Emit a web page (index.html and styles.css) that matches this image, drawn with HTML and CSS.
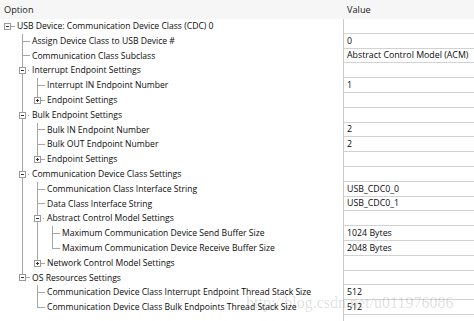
FILE: index.html
```html
<!DOCTYPE html>
<html>
<head>
<meta charset="utf-8">
<link rel="stylesheet" href="styles.css">
</head>
<body>
<div class="grid">
  <div class="hdr hdr-opt">Option</div>
  <div class="hdr hdr-val">Value</div>

  <div class="opt"><span class="c root"><span class="box minus"></span></span><span class="t">USB Device: Communication Device Class (CDC) 0</span></div>
  <div class="val"></div>

  <div class="opt"><span class="c"></span><span class="c tee"></span><span class="t">Assign Device Class to USB Device #</span></div>
  <div class="val">0</div>

  <div class="opt"><span class="c"></span><span class="c tee"></span><span class="t">Communication Class Subclass</span></div>
  <div class="val">Abstract Control Model (ACM)</div>

  <div class="opt"><span class="c"></span><span class="c full"><span class="box minus"></span></span><span class="t">Interrupt Endpoint Settings</span></div>
  <div class="val"></div>

  <div class="opt"><span class="c"></span><span class="c full"></span><span class="c tee"></span><span class="t">Interrupt IN Endpoint Number</span></div>
  <div class="val">1</div>

  <div class="opt"><span class="c"></span><span class="c full"></span><span class="c elbow"><span class="box plus"></span></span><span class="t">Endpoint Settings</span></div>
  <div class="val"></div>

  <div class="opt"><span class="c"></span><span class="c full"><span class="box minus"></span></span><span class="t">Bulk Endpoint Settings</span></div>
  <div class="val"></div>

  <div class="opt"><span class="c"></span><span class="c full"></span><span class="c tee"></span><span class="t">Bulk IN Endpoint Number</span></div>
  <div class="val">2</div>

  <div class="opt"><span class="c"></span><span class="c full"></span><span class="c tee"></span><span class="t">Bulk OUT Endpoint Number</span></div>
  <div class="val">2</div>

  <div class="opt"><span class="c"></span><span class="c full"></span><span class="c elbow"><span class="box plus"></span></span><span class="t">Endpoint Settings</span></div>
  <div class="val"></div>

  <div class="opt"><span class="c"></span><span class="c full"><span class="box minus"></span></span><span class="t">Communication Device Class Settings</span></div>
  <div class="val"></div>

  <div class="opt"><span class="c"></span><span class="c full"></span><span class="c tee"></span><span class="t">Communication Class Interface String</span></div>
  <div class="val">USB_CDC0_0</div>

  <div class="opt"><span class="c"></span><span class="c full"></span><span class="c tee"></span><span class="t">Data Class Interface String</span></div>
  <div class="val">USB_CDC0_1</div>

  <div class="opt"><span class="c"></span><span class="c full"></span><span class="c full"><span class="box minus"></span></span><span class="t">Abstract Control Model Settings</span></div>
  <div class="val"></div>

  <div class="opt"><span class="c"></span><span class="c full"></span><span class="c full"></span><span class="c tee"></span><span class="t">Maximum Communication Device Send Buffer Size</span></div>
  <div class="val">1024 Bytes</div>

  <div class="opt"><span class="c"></span><span class="c full"></span><span class="c full"></span><span class="c elbow"></span><span class="t">Maximum Communication Device Receive Buffer Size</span></div>
  <div class="val">2048 Bytes</div>

  <div class="opt"><span class="c"></span><span class="c full"></span><span class="c elbow"><span class="box plus"></span></span><span class="t">Network Control Model Settings</span></div>
  <div class="val"></div>

  <div class="opt"><span class="c"></span><span class="c elbow"><span class="box minus"></span></span><span class="t">OS Resources Settings</span></div>
  <div class="val"></div>

  <div class="opt"><span class="c"></span><span class="c"></span><span class="c tee"></span><span class="t">Communication Device Class Interrupt Endpoint Thread Stack Size</span></div>
  <div class="val">512</div>

  <div class="opt"><span class="c"></span><span class="c"></span><span class="c elbow"></span><span class="t">Communication Device Class Bulk Endpoints Thread Stack Size</span></div>
  <div class="val">512</div>

  <div class="opt"></div>
  <div class="val last"></div>
</div>
<div class="watermark">http://blog.csdn.net/u011976086</div>
</body>
</html>
```
FILE: styles.css
```css
html, body {
  margin: 0;
  padding: 0;
  background: #ffffff;
}
body {
  width: 474px;
  height: 321px;
  overflow: hidden;
  position: relative;
  font-family: "Open Sans", "Noto Sans", sans-serif;
  font-size: 8.6px;
  color: #0a0a0a;
}
.grid {
  display: grid;
  grid-template-columns: 343px 1fr;
  grid-template-rows: 19px;
  grid-auto-rows: 14.8px;
}
.hdr {
  background: #f6f6f6;
  display: flex;
  align-items: center;
  font-size: 9.2px;
  color: #1a1a1a;
}
.hdr-opt { padding-left: 4px; }
.hdr-val { padding-left: 4px; }
.opt {
  display: flex;
  align-items: stretch;
  white-space: nowrap;
}
.c {
  flex: 0 0 15px;
  width: 15px;
  display: flex;
  align-items: center;
  background-repeat: no-repeat;
}
/* continuing sibling line */
.c.full {
  background-image: linear-gradient(#a6a6a6, #a6a6a6);
  background-size: 1px 100%;
  background-position: 7px 0;
}
/* line through + connector */
.c.tee {
  background-image: linear-gradient(#a6a6a6, #a6a6a6), linear-gradient(#a6a6a6, #a6a6a6);
  background-size: 1px 100%, 9px 1px;
  background-position: 7px 0, 7px 50%;
}
/* last child: top half + connector */
.c.elbow {
  background-image: linear-gradient(#a6a6a6, #a6a6a6), linear-gradient(#a6a6a6, #a6a6a6);
  background-size: 1px 50%, 9px 1px;
  background-position: 7px 0, 7px 50%;
}
.c.root {
  background-image: linear-gradient(#a6a6a6, #a6a6a6);
  background-size: 6px 1px;
  background-position: 10px 50%;
}
.box {
  width: 7px;
  height: 7px;
  margin-left: 4px;
  box-sizing: border-box;
  border: 1px solid #9a9a9a;
  background: #fff;
  position: relative;
}
.c.full .box, .c.elbow .box {
  box-shadow: 6px 0 0 -3px #a6a6a6;
}
.box::before {
  content: "";
  position: absolute;
  left: 1px;
  top: 2px;
  width: 3px;
  height: 1px;
  background: #333;
}
.box.plus::after {
  content: "";
  position: absolute;
  left: 2px;
  top: 1px;
  width: 1px;
  height: 3px;
  background: #333;
}
.t {
  display: flex;
  align-items: center;
  padding-left: 2px;
  line-height: 1;
}
.val {
  border-left: 1px solid #c9c9c9;
  border-bottom: 1px solid #d2d2d2;
  display: flex;
  align-items: center;
  padding-left: 3px;
  white-space: nowrap;
  box-sizing: border-box;
  font-size: 8.8px;
}
.hdr-val + .val {
  border-top: 1px solid #d2d2d2;
}
.watermark {
  position: absolute;
  left: 246px;
  top: 294px;
  font-family: "Liberation Serif", serif;
  font-size: 16px;
  color: rgba(0, 0, 0, 0.14);
  white-space: nowrap;
}
```
